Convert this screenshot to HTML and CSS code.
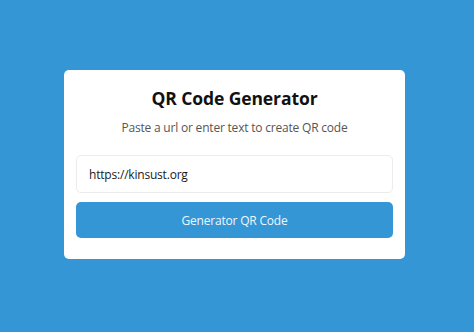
FILE: index.html
```html
<!DOCTYPE html>
<html lang="en">
<head>
<meta charset="utf-8">
<title>QR Code Generator</title>
<link rel="stylesheet" href="styles.css">
</head>
<body>
<div class="page">
  <div class="card">
    <h1 class="title">QR Code Generator</h1>
    <p class="subtitle">Paste a url or enter text to create QR code</p>
    <input class="field" type="text" value="https://kinsust.org">
    <button class="btn" type="button">Generator QR Code</button>
  </div>
</div>
</body>
</html>
```
FILE: styles.css
```css
* { box-sizing: border-box; }
html, body { margin: 0; padding: 0; }
body {
  background: #3596d6;
  font-family: "Open Sans", "Noto Sans", sans-serif;
  width: 474px;
  height: 332px;
  overflow: hidden;
}
.page {
  padding: 70px 0 0 64px;
}
.card {
  width: 341px;
  background: #fff;
  border-radius: 5px;
  padding: 15px 12px 21px;
  display: flex;
  flex-direction: column;
}
.title {
  margin: 0;
  font-size: 17.5px;
  font-weight: 700;
  letter-spacing: -0.1px;
  color: #111;
  text-align: center;
  line-height: 26px;
}
.subtitle {
  margin: 8px 0 0;
  font-size: 12px;
  letter-spacing: -0.2px;
  color: #555;
  text-align: center;
  line-height: 18px;
}
.field {
  margin-top: 18px;
  height: 38px;
  width: 100%;
  border: 1px solid #ececec;
  border-radius: 5px;
  padding: 0 12px;
  font-family: inherit;
  font-size: 12px;
  letter-spacing: -0.2px;
  color: #1a1a1a;
  background: #fff;
  outline: none;
}
.btn {
  margin-top: 9px;
  height: 36px;
  width: 100%;
  border: none;
  border-radius: 5px;
  background: #3596d6;
  color: #eef6fc;
  font-family: inherit;
  font-size: 12px;
  letter-spacing: -0.2px;
}
```
